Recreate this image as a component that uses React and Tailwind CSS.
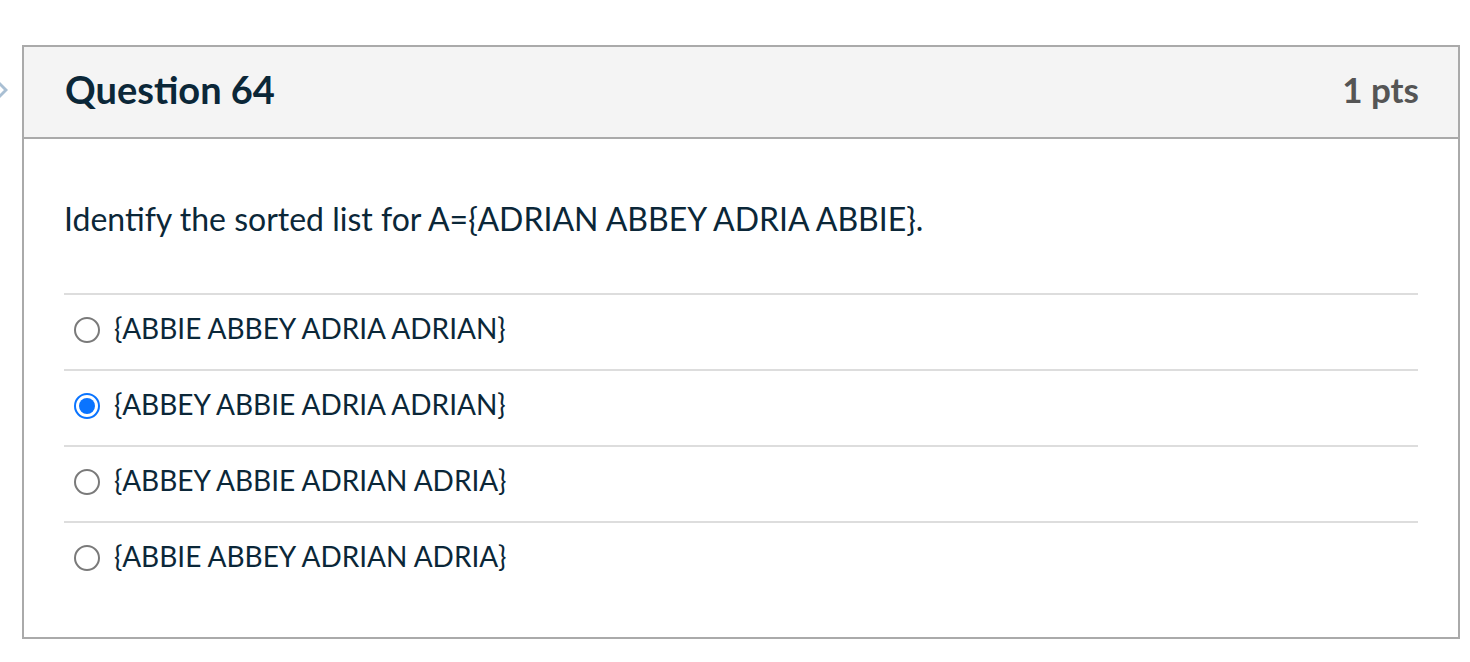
import React from "react";

const options = [
  { label: "{ABBIE ABBEY ADRIA ADRIAN}", checked: false },
  { label: "{ABBEY ABBIE ADRIA ADRIAN}", checked: true },
  { label: "{ABBEY ABBIE ADRIAN ADRIA}", checked: false },
  { label: "{ABBIE ABBEY ADRIAN ADRIA}", checked: false },
];

function Radio({ checked }) {
  if (checked) {
    return (
      <span className="mt-[3px] flex h-[26px] w-[26px] shrink-0 items-center justify-center rounded-full border-2 border-[#0a74ff] bg-white">
        <span className="h-[16px] w-[16px] rounded-full bg-[#0a74ff]" />
      </span>
    );
  }
  return <span className="mt-[3px] h-[26px] w-[26px] shrink-0 rounded-full border-2 border-[#7a7a7a] bg-white" />;
}

export default function App() {
  return (
    <div className="relative h-[662px] w-[1470px] bg-white" style={{ fontFamily: "Lato, 'Noto Sans', sans-serif" }}>
      <svg className="absolute left-0 top-[80px]" width="8" height="20" viewBox="0 0 8 20">
        <path d="M-2 2 L6 10 L-2 18" fill="none" stroke="#a9bfd3" strokeWidth="3" />
      </svg>
      <div className="pt-[45px] pl-[22px]">
        <div className="w-[1438px] border-2 border-[#aaaaaa]">
          <div className="flex h-[92px] items-center justify-between border-b-2 border-[#aaaaaa] bg-[#f4f4f4] pb-[6px] pl-[41px] pr-[39px]">
            <h2 className="text-[38px] font-bold text-[#0b2738]">Question 64</h2>
            <span className="text-[35px] font-bold text-[#555555]">1 pts</span>
          </div>
          <div className="px-[40px] pb-[40px] pt-[60px]">
            <p className="text-[32px] leading-[40px] text-[#0b2738]">
              Identify the sorted list for A={"{"}ADRIAN ABBEY ADRIA ABBIE{"}"}.
            </p>
            <div className="mt-[54px]">
              {options.map((o) => (
                <div key={o.label} className="flex h-[76px] items-center gap-[14px] border-t-2 border-[#dddddd] pb-[8px] pl-[10px]">
                  <Radio checked={o.checked} />
                  <span className="text-[28px] text-[#0b2738]">{o.label}</span>
                </div>
              ))}
            </div>
          </div>
        </div>
      </div>
    </div>
  );
}
